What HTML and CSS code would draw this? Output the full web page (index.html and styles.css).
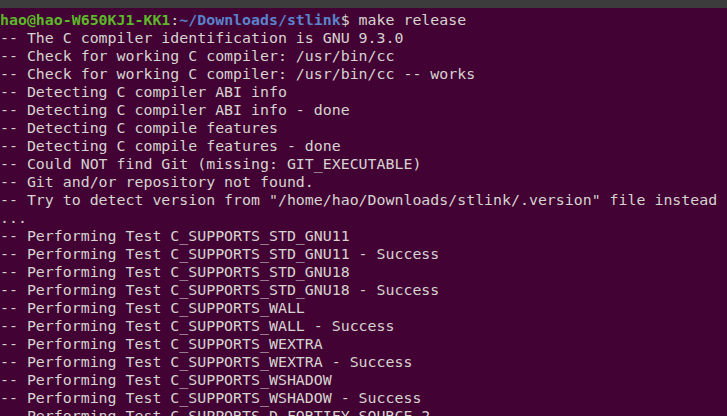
FILE: index.html
```html
<!DOCTYPE html>
<html>
<head>
<meta charset="utf-8">
<link rel="stylesheet" href="styles.css">
</head>
<body>
<div class="topbar"></div>
<pre class="term"><span class="user">hao@hao-W650KJ1-KK1</span>:<span class="path">~/Downloads/stlink</span>$ make release
-- The C compiler identification is GNU 9.3.0
-- Check for working C compiler: /usr/bin/cc
-- Check for working C compiler: /usr/bin/cc -- works
-- Detecting C compiler ABI info
-- Detecting C compiler ABI info - done
-- Detecting C compile features
-- Detecting C compile features - done
-- Could NOT find Git (missing: GIT_EXECUTABLE)
-- Git and/or repository not found.
-- Try to detect version from "/home/hao/Downloads/stlink/.version" file instead
...
-- Performing Test C_SUPPORTS_STD_GNU11
-- Performing Test C_SUPPORTS_STD_GNU11 - Success
-- Performing Test C_SUPPORTS_STD_GNU18
-- Performing Test C_SUPPORTS_STD_GNU18 - Success
-- Performing Test C_SUPPORTS_WALL
-- Performing Test C_SUPPORTS_WALL - Success
-- Performing Test C_SUPPORTS_WEXTRA
-- Performing Test C_SUPPORTS_WEXTRA - Success
-- Performing Test C_SUPPORTS_WSHADOW
-- Performing Test C_SUPPORTS_WSHADOW - Success
-- Performing Test C_SUPPORTS_D_FORTIFY_SOURCE_2</pre>
</body>
</html>
```
FILE: styles.css
```css
html, body {
  margin: 0;
  padding: 0;
  background: #420233;
  overflow: hidden;
  height: 416px;
}
.topbar {
  height: 8px;
  background: #3c3c3c;
}
.term {
  margin: 0;
  padding: 3px 0 0 0;
  font-family: "DejaVu Sans Mono", monospace;
  font-size: 14.9px;
  line-height: 18px;
  color: #d6d3d0;
  white-space: pre;
}
.user {
  color: #5cb82a;
  font-weight: bold;
}
.path {
  color: #5b82cc;
  font-weight: bold;
}
```
